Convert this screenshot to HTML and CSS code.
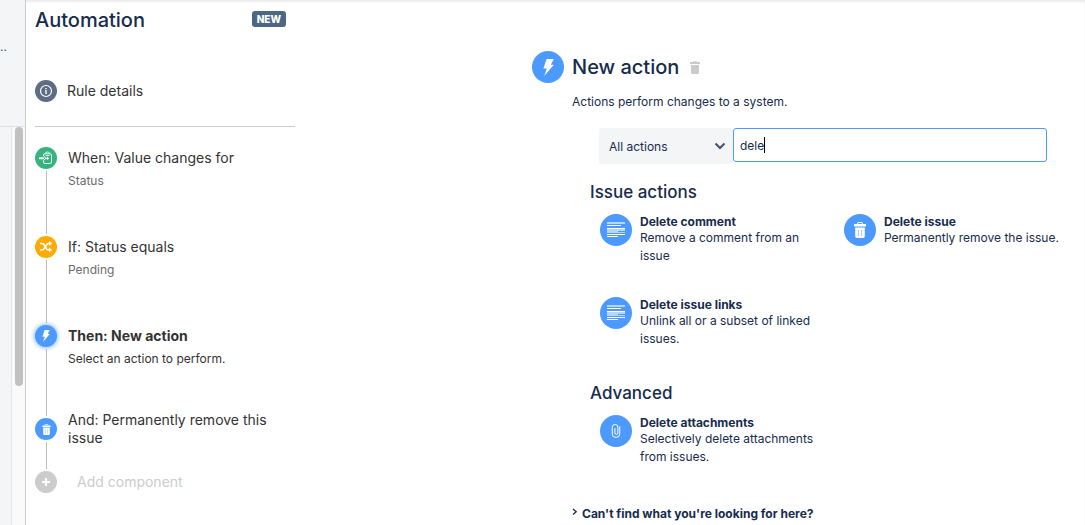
FILE: index.html
```html
<!DOCTYPE html>
<html lang="en">
<head>
<meta charset="utf-8">
<title>Automation</title>
<link rel="stylesheet" href="styles.css">
</head>
<body>
<svg class="defs" aria-hidden="true">
  <symbol id="bolt" viewBox="0 0 16 16"><path d="M6.2 0H13L10.2 5.4H13L4 16L6.4 9H3.2Z" fill="currentColor"/></symbol>
  <symbol id="trash" viewBox="0 0 16 16">
    <path d="M5.7 2V.9Q5.7.5 6.1.5H9.9Q10.3.5 10.3.9V2" fill="none" stroke="currentColor"/>
    <rect x="2" y="2" width="12" height="2.6" rx=".7" fill="currentColor"/>
    <path d="M3.2 5.6H12.8V14Q12.8 16 11 16H5Q3.2 16 3.2 14Z" fill="currentColor"/>
    <path d="M6.4 8V14M9.6 8V14" stroke="#4c9aff" stroke-opacity=".55"/>
  </symbol>
  <symbol id="lines" viewBox="0 0 18 16">
    <path d="M0 3.5H14M0 6.5H18M0 12.5H18M0 14.5H11" fill="none" stroke="#fff"/>
    <path d="M0 .5H18M0 1.5H18M0 7.5H18M0 8.5H18M0 9.5H11M0 10.5H18" fill="none" stroke="#fff" stroke-opacity=".6"/>
  </symbol>
</svg>
<div class="app">
  <aside class="sidebar">
    <div class="sidebar-top">..</div>
    <div class="sidebar-scroll"><div class="track"><div class="thumb"></div></div></div>
  </aside>
  <section class="rule">
    <header class="rule-head"><h1>Automation</h1><span class="badge">NEW</span></header>
    <div class="details">
      <span class="dot slate"><svg width="14" height="14" viewBox="0 0 14 14"><circle cx="7" cy="7" r="5.5" fill="none" stroke="#fff" stroke-width="1.2"/><path d="M7 6V10M7 4V5.3" stroke="#fff" stroke-width="1.4"/></svg></span>
      <span class="name">Rule details</span>
    </div>
    <ol class="steps">
      <li class="step">
        <div class="rail"><span class="dot green"><svg width="14" height="14" viewBox="0 0 14 14" fill="none" stroke="#fff"><path d="M4.5 5V4Q4.5 2.8 6 2.8H11Q12.5 2.8 12.5 4V11Q12.5 12.5 11 12.5H6Q4.5 12.5 4.5 11V9.5" stroke-width=".9"/><path d="M6 2.8Q6.5 1 8.5 1T11 2.8M6.5 4.5H10.5" stroke-width=".8"/><path d="M0 7.3H5" stroke-width="1.8"/><path d="M4.5 5.2L7 7.3L4.5 9.4M8.5 5.8V8.8M7 7.3H10" stroke-width="1"/></svg></span></div>
        <div class="text"><span class="name">When: Value changes for</span><span class="sub">Status</span></div>
      </li>
      <li class="step">
        <div class="rail"><span class="dot orange"><svg width="14" height="12" viewBox="0 0 14 12"><path d="M1 2.5H3.2Q4.3 2.5 5 3.6L7.4 7.6Q8.3 9 9.5 9H11M1 9H3.2Q4.3 9 5 7.9L7.4 4Q8.3 2.5 9.5 2.5H11" fill="none" stroke="#fff" stroke-width="1.7"/><path d="M10 0L13.2 2.5L10 5ZM10 6.5L13.2 9L10 11.5Z" fill="#fff"/></svg></span></div>
        <div class="text"><span class="name">If: Status equals</span><span class="sub">Pending</span></div>
      </li>
      <li class="step current">
        <div class="rail"><span class="dot blue glow"><svg width="12" height="12"><use href="#bolt"/></svg></span></div>
        <div class="text"><span class="name">Then: New action</span><span class="sub">Select an action to perform.</span></div>
      </li>
      <li class="step tall">
        <div class="rail"><span class="dot blue"><svg width="11" height="11"><use href="#trash"/></svg></span></div>
        <div class="text"><span class="name">And: Permanently remove this issue</span></div>
      </li>
      <li class="step last">
        <div class="rail"><span class="dot gray"><svg width="10" height="10" viewBox="0 0 10 10"><path d="M5 1V9M1 5H9" stroke="#fff" stroke-width="2.2"/></svg></span></div>
        <button class="add" type="button">Add component</button>
      </li>
    </ol>
  </section>
  <main class="editor">
    <header class="editor-head">
      <span class="disc"><svg width="17" height="17"><use href="#bolt"/></svg></span>
      <h2>New action</h2>
      <button class="remove" type="button" aria-label="Delete action"><svg width="12" height="13" viewBox="0 0 12 13" fill="#ccc"><path d="M4 1Q4 .3 4.6 .3H7.4Q8 .3 8 1H11V3H1V1ZM2 4H10V11.5Q10 13 8.5 13H3.5Q2 13 2 11.5Z"/></svg></button>
    </header>
    <p class="intro">Actions perform changes to a system.</p>
    <form class="filter">
      <div class="select">
        <select aria-label="Action category"><option>All actions</option></select>
        <svg class="chevron" width="12" height="8" viewBox="0 0 12 8"><path d="M1.5 1.5L6 6L10.5 1.5" fill="none" stroke="#42526e" stroke-width="2"/></svg>
      </div>
      <input type="text" value="dele" aria-label="Search actions" autofocus>
      <span class="caret"></span>
    </form>
    <section class="group">
      <h3>Issue actions</h3>
      <div class="grid">
        <article class="action"><span class="disc"><svg width="18" height="16"><use href="#lines"/></svg></span><div><h4>Delete comment</h4><p>Remove a comment from an issue</p></div></article>
        <article class="action"><span class="disc"><svg width="16" height="16"><use href="#trash"/></svg></span><div><h4>Delete issue</h4><p>Permanently remove the issue.</p></div></article>
        <article class="action"><span class="disc"><svg width="18" height="16"><use href="#lines"/></svg></span><div><h4>Delete issue links</h4><p>Unlink all or a subset of linked issues.</p></div></article>
      </div>
    </section>
    <section class="group">
      <h3>Advanced</h3>
      <div class="grid">
        <article class="action"><span class="disc"><svg width="10" height="16" viewBox="0 0 12 18"><path d="M8.3 4.5V11.5Q8.3 13 6.5 13T4.7 11.5V5.5M1.5 4.5V12.5Q1.5 16.7 6 16.7T10.5 12.5V3.5M1.5 4.5Q1.5 1.2 4.9 1.2T8.3 4.5" fill="none" stroke="#fff" stroke-width="1.2"/></svg></span><div><h4>Delete attachments</h4><p>Selectively delete attachments from issues.</p></div></article>
      </div>
    </section>
    <button class="more" type="button"><svg width="6" height="12" viewBox="0 0 6 12"><path d="M1 1L4.2 3.8L1 6.6" fill="none" stroke="#172b4d" stroke-width="1.3"/></svg>Can't find what you're looking for here?</button>
  </main>
</div>
</body>
</html>
```
FILE: styles.css
```css
* { box-sizing: border-box; }
body {
  margin: 0;
  background: #fff;
  color: #172b4d;
  font: 13px/18px Inter, "Liberation Sans", sans-serif;
}
h1, h2, h3, h4, p, ol { margin: 0; padding: 0; }
h1, h2, h3 { font-weight: 500; }
button { border: 0; padding: 0; background: none; color: inherit; font: inherit; }
.defs { display: none; }
.app {
  display: flex;
  height: 100vh;
  overflow: hidden;
  box-shadow: inset 0 2px 2px #ececee;
}

.sidebar {
  flex: none;
  width: 26px;
  display: flex;
  flex-direction: column;
  background: #f4f5f7;
  border-right: 1px solid #ccc;
}
.sidebar-top { height: 127px; padding-top: 38px; border-bottom: 1px solid #dfe1e6; font-size: 12px; color: #42526e; }
.sidebar-scroll { flex: 1; display: flex; justify-content: flex-end; }
.track { width: 14px; padding-left: 3px; background: #fafafa; border-left: 1px solid #e6e6e6; }
.thumb { width: 8px; height: 259px; border-radius: 4px; background: #c1c1c1; }

.rule { flex: none; width: 269px; padding-left: 9px; }
.rule-head { display: flex; justify-content: space-between; align-items: flex-start; padding: 8px 9px 0 0; }
h1 { font-size: 20px; line-height: 24px; }
.badge {
  height: 16px;
  margin-top: 3px;
  padding: 0 5px;
  border-radius: 3px;
  background: #4c6785;
  color: #fff;
  font-size: 10px;
  line-height: 16px;
  font-weight: 800;
}
.details {
  display: flex;
  align-items: center;
  gap: 10px;
  padding: 48px 0 24px;
  border-bottom: 1px solid #ccc;
}
.name { font-size: 14px; line-height: 18px; color: #333; }
.dot {
  flex: none;
  width: 22px;
  height: 22px;
  border-radius: 50%;
  display: flex;
  align-items: center;
  justify-content: center;
  color: #fff;
}
.slate { background: #5e6c84; }
.green { background: #36b37e; }
.orange { background: #ffab00; }
.blue { background: #4c9aff; }
.gray { background: #ccc; }
.glow { box-shadow: 0 0 4px 1px #8fc0ff; }
.steps { list-style: none; padding-top: 20px; }
.step { display: flex; gap: 11px; min-height: 89px; }
.rail { display: flex; flex-direction: column; align-items: center; gap: 2px; padding-bottom: 2px; }
.rail::after { content: ""; flex: 1; width: 1px; background: #bbb; }
.text { display: flex; flex-direction: column; gap: 5px; padding-top: 2px; }
.sub { font-size: 12px; color: #6b6b6b; }
.current { min-height: 86px; }
.current .name { font-weight: 700; }
.current .sub { color: #333; }
.tall { min-height: 60px; }
.tall .text { padding-top: 0; }
.tall .rail::before { content: ""; height: 5px; width: 1px; background: #bbb; }
.current .rail { padding-bottom: 0; }
.last { min-height: 22px; }
.last .rail { padding-bottom: 0; }
.last .rail::after { display: none; }
.add { padding-left: 9px; color: #ccc; font-size: 14px; }

.editor { flex: 1; min-width: 0; padding: 51px 0 0 237px; }
.editor-head { display: flex; align-items: center; gap: 8px; }
.disc {
  flex: none;
  width: 32px;
  height: 32px;
  border-radius: 50%;
  display: flex;
  align-items: center;
  justify-content: center;
  background: #4c9aff;
  color: #fff;
}
h2 { font-size: 20px; line-height: 24px; }
.remove { display: flex; margin-left: 2px; }
.intro { margin: 10px 0 0 40px; font-size: 12px; }
.filter { position: relative; display: flex; margin: 17px 38px 0 67px; }
.select { flex: none; position: relative; width: 134px; height: 36px; }
select, input { font: inherit; color: inherit; outline: 0; }
select {
  appearance: none;
  width: 100%;
  height: 100%;
  padding: 1px 10px 0;
  border: 0;
  border-radius: 3px;
  background: #f4f5f7;
  font-size: 12px;
}
.chevron { position: absolute; right: 7px; top: 14px; }
input {
  flex: 1;
  min-width: 0;
  height: 34px;
  padding: 0 6px;
  border: 1px solid #4c9aff;
  border-radius: 3px;
  background: #fff;
  font-size: 12px;
  caret-color: transparent;
}
.caret { position: absolute; left: 165px; top: 9px; width: 1px; height: 16px; background: #000; }
.group { margin: 17px 0 0 58px; }
h3 { font-size: 17px; line-height: 22px; }
.grid {
  display: grid;
  grid-template-columns: 228px 1fr;
  column-gap: 16px;
  row-gap: 32px;
  padding: 11px 0 17px 10px;
}
.action { display: flex; gap: 8px; }
h4 { font-size: 12px; line-height: 15px; font-weight: 700; }
.action p { font-size: 12px; line-height: 18px; }
.more { display: flex; align-items: center; gap: 4px; margin: 22px 0 0 40px; font-size: 12px; font-weight: 700; }
```
